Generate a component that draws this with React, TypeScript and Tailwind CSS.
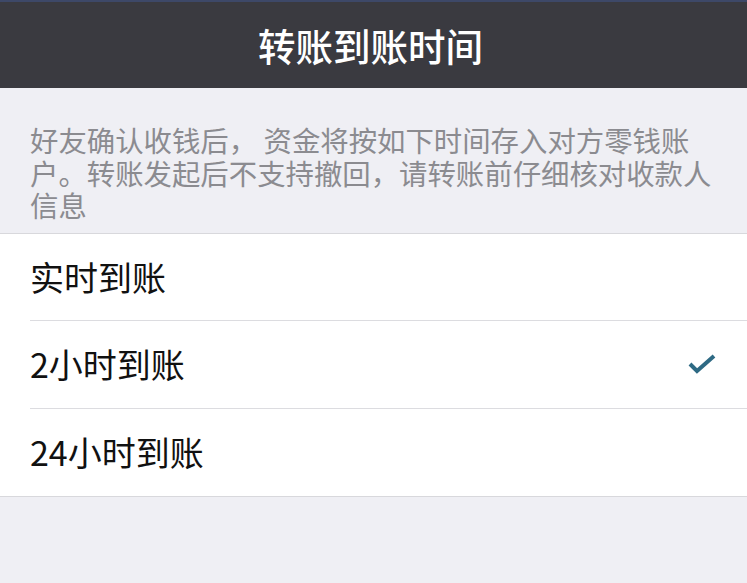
import React from "react";

const options = [
  { id: 1, label: "实时到账", checked: false },
  { id: 2, label: "2小时到账", checked: true },
  { id: 3, label: "24小时到账", checked: false },
];

const font = { fontFamily: '"Noto Sans CJK SC", "Noto Sans", sans-serif' };

const App: React.FC = () => {
  return (
    <div className="w-[747px] h-[583px] bg-[#efeff4] overflow-hidden" style={font}>
      <div className="h-[2px] bg-[#3d4868]" />
      <div className="h-[86px] bg-[#3a3a40] flex items-center justify-center">
        <span className="text-white text-[37.5px] font-medium leading-none -ml-[6px]">转账到账时间</span>
      </div>
      <div className="px-[30px] pt-[36px] pb-[11px] text-[28.4px] leading-[32.5px] text-[#8b8b90]">
        好友确认收钱后， 资金将按如下时间存入对方零钱账
        <br />
        户。转账发起后不支持撤回，请转账前仔细核对收款人
        <br />
        信息
      </div>
      <div className="bg-white border-t border-b border-[#d8d8dc]">
        {options.map((o, i) => (
          <div key={o.id} className="pl-[30px]">
            <div
              className={`flex items-center justify-between pr-[30px] ${
                i > 0 ? "h-[88px] border-t border-[#dcdce0]" : "h-[86px]"
              }`}
            >
              <span className="text-[34px] text-[#111] leading-none">{o.label}</span>
              {o.checked && (
                <svg width="30" height="24" viewBox="0 0 30 24">
                  <path
                    d="M3 12 L10 19 L27 4"
                    fill="none"
                    stroke="#2e6a84"
                    strokeWidth="4"
                    strokeLinecap="butt"
                  />
                </svg>
              )}
            </div>
          </div>
        ))}
      </div>
    </div>
  );
};

export default App;
